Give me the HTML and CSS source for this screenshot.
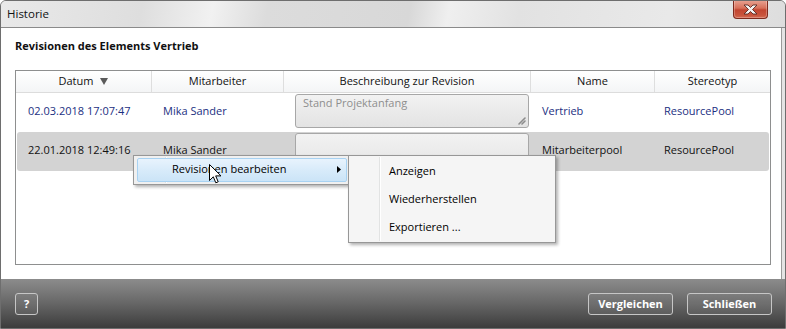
FILE: index.html
```html
<!DOCTYPE html>
<html>
<head>
<meta charset="utf-8">
<link rel="stylesheet" href="styles.css">
</head>
<body>
<div class="window">
  <div class="titlebar">
    <span class="title">Historie</span>
    <div class="close">
      <svg width="17" height="11" viewBox="0 0 17 11"><path d="M2 1 H6 L8.5 3.5 L11 1 H15 L10.5 5.5 L15 10 H11 L8.5 7.5 L6 10 H2 L6.5 5.5 Z" fill="#f4f4f4" stroke="#5a2a22" stroke-width="0.9" stroke-linejoin="round"/></svg>
    </div>
  </div>
  <div class="body">
    <div class="heading">Revisionen des Elements Vertrieb</div>
    <div class="grid">
      <div class="thead">
        <div class="th">Datum <svg class="sort" width="8" height="7" viewBox="0 0 8 7"><path d="M0 0 H8 L4 7 Z" fill="#5a5a5a"/></svg></div>
        <div class="th">Mitarbeiter</div>
        <div class="th">Beschreibung zur Revision</div>
        <div class="th">Name</div>
        <div class="th last">Stereotyp</div>
      </div>
      <div class="row r1">
        <div class="td c1 link">02.03.2018 17:07:47</div>
        <div class="td c2 link">Mika Sander</div>
        <div class="td c3"><div class="ta"><span class="ph">Stand Projektanfang</span>
          <svg class="grip" width="9" height="9" viewBox="0 0 9 9"><path d="M8 2 L2 8 M8 5 L5 8" stroke="#8c8c8c" stroke-width="1.6" stroke-linecap="round"/></svg></div></div>
        <div class="td c4 link">Vertrieb</div>
        <div class="td c5 link">ResourcePool</div>
      </div>
      <div class="row r2">
        <div class="td c1">22.01.2018 12:49:16</div>
        <div class="td c2">Mika Sander</div>
        <div class="td c3"><div class="ta"></div></div>
        <div class="td c4">Mitarbeiterpool</div>
        <div class="td c5">ResourcePool</div>
      </div>
    </div>
  </div>
  <div class="footer">
    <button class="btn help">?</button>
    <div class="spacer"></div>
    <button class="btn wide">Vergleichen</button>
    <button class="btn wide">Schließen</button>
  </div>

  <div class="menu">
    <div class="gutter"></div>
    <div class="mi hot">Revisionen bearbeiten
      <svg class="arrow" width="4" height="7" viewBox="0 0 4 7"><path d="M0 0 L4 3.5 L0 7 Z" fill="#000"/></svg>
    </div>
  </div>
  <div class="submenu">
    <div class="gutter"></div>
    <div class="si">Anzeigen</div>
    <div class="si">Wiederherstellen</div>
    <div class="si">Exportieren ...</div>
  </div>
  <svg class="cursor" width="13" height="21" viewBox="0 0 13 21"><path d="M0.5 0.5 V16.5 L4.3 12.8 L6.8 18.8 L9.2 17.8 L6.7 11.9 L12 11.9 Z" fill="#fff" stroke="#000" stroke-width="1" stroke-linejoin="round"/></svg>
</div>
</body>
</html>
```
FILE: styles.css
```css
* { box-sizing: border-box; }
html, body { margin: 0; padding: 0; }
body {
  width: 786px;
  height: 329px;
  overflow: hidden;
  background: #ffffff;
  font-family: "Open Sans", "Noto Sans", sans-serif;
  font-size: 11px;
  color: #1e1e1e;
}
.window {
  position: relative;
  width: 786px;
  height: 329px;
  display: flex;
  flex-direction: column;
  border: 1px solid #6e6e6e;
  border-radius: 6px 6px 0 0;
  background: #e4e4e4;
  overflow: hidden;
}
.titlebar {
  position: relative;
  flex: none;
  height: 27px;
  display: flex;
  align-items: center;
  padding-left: 6px;
  padding-bottom: 1px;
  border-bottom: 1px solid #8a8a8a;
  background: linear-gradient(100deg, #e9e9e9 0%, #dedede 18%, #f1f1f1 27%, #dcdcdc 34%, #d8d8d8 52%, #efefef 57%, #e2e2e2 66%, #e9e9e9 85%, #dddddd 100%);
}
.title { font-size: 11.5px; color: #111; }
.close {
  position: absolute;
  top: -1px;
  right: 17px;
  width: 35px;
  height: 19px;
  display: flex;
  align-items: center;
  justify-content: center;
  border: 1px solid #7e2a1d;
  border-top: none;
  border-radius: 0 0 4px 4px;
  background: linear-gradient(#e9a595 0%, #d8705a 45%, #c24530 55%, #c9553d 85%, #d66d54 100%);
  box-shadow: inset 0 0 0 1px rgba(255,255,255,0.25);
}
.body {
  flex: 1;
  background: #ffffff;
  margin-right: 3px;
  border-right: 1px solid #9a9a9a;
  padding: 10px 0 0 14px;
}
.heading {
  font-weight: bold;
  font-size: 11px;
  line-height: 16px;
  color: #111;
  margin-bottom: 16px;
}
.grid {
  width: 756px;
  height: 195px;
  border: 1px solid #8e8f8f;
}
.thead {
  display: grid;
  grid-template-columns: 136px 132px 247px 124px 1fr;
  height: 22px;
  border-bottom: 1px solid #dcdcdc;
  background: linear-gradient(#ffffff, #f4f5f6);
}
.th {
  display: flex;
  align-items: center;
  justify-content: center;
  border-right: 1px solid #dedede;
  color: #111;
  padding-bottom: 3px;
}
.th.last { border-right: none; }
.sort { margin-left: 7px; margin-top: 2px; }
.row {
  display: grid;
  grid-template-columns: 136px 132px 247px 124px 1fr;
  margin: 0 1px;
}
.r1 { height: 38px; margin-bottom: 1px; }
.r2 { height: 39px; background: #d3d3d3; border-radius: 3px; }
.td { display: flex; align-items: center; padding-left: 10px; padding-bottom: 4px; }
.r2 .td { padding-bottom: 6px; color: #111; }
.c1 { padding-left: 11px; }
.c5 { padding-left: 8px; }
.link { color: #1b2f7f; }
.row .c3 { align-items: flex-start; padding-bottom: 0; }
.ta {
  position: relative;
  width: 234px;
  height: 34px;
  margin-top: 1px;
  border: 1px solid #a7a7a7;
  border-radius: 3px;
  background: linear-gradient(#f2f2f2, #e3e3e3);
  padding: 0 7px;
  line-height: 15px;
}
.r2 .ta { margin-top: 1px; height: 40px; }
.ph { color: #8e8e8e; }
.grip { position: absolute; right: 2px; bottom: 2px; }
.footer {
  flex: none;
  height: 49px;
  display: flex;
  align-items: center;
  gap: 14px;
  padding: 0 13px 0 14px;
  background: linear-gradient(#8c8c8c, #6a6a6a 45%, #3c3c3c);
}
.spacer { flex: 1; }
.btn {
  height: 22px;
  border: 1px solid #c6c6c6;
  border-radius: 3px;
  background: rgba(255,255,255,0.06);
  color: #ffffff;
  font-family: "Open Sans", "Noto Sans", sans-serif;
  font-weight: bold;
  font-size: 11px;
  padding: 0 0 2px 0;
  margin-top: 1px;
}
.help { width: 23px; }
.wide { width: 85px; }
.menu {
  position: absolute;
  left: 132px;
  top: 154px;
  width: 216px;
  height: 30px;
  border: 1px solid #979797;
  background: #f0f0f0;
  box-shadow: 2px 2px 3px rgba(0,0,0,0.3);
  padding: 2px 1px 2px 3px;
}
.menu .gutter {
  position: absolute;
  left: 31px;
  top: 1px;
  bottom: 1px;
  width: 2px;
  border-left: 1px solid #e2e3e3;
  border-right: 1px solid #ffffff;
}
.mi {
  position: relative;
  height: 24px;
  display: flex;
  align-items: center;
  padding-left: 34px;
  padding-bottom: 4px;
  color: #000;
}
.mi.hot {
  border: 1px solid #a8d2f2;
  border-radius: 2px;
  background: linear-gradient(#e8f3fd, #d8ebfa 50%, #cbe4f7);
}
.arrow { position: absolute; left: 199px; top: 7px; }
.submenu {
  position: absolute;
  left: 347px;
  top: 154px;
  width: 208px;
  height: 88px;
  border: 1px solid #979797;
  background: #f5f5f5;
  box-shadow: 2px 2px 3px rgba(0,0,0,0.3);
  padding: 1px 2px;
}
.submenu .gutter {
  position: absolute;
  left: 30px;
  top: 1px;
  bottom: 1px;
  width: 2px;
  border-left: 1px solid #e2e3e3;
  border-right: 1px solid #ffffff;
}
.si {
  height: 28px;
  display: flex;
  align-items: center;
  padding-left: 38px;
  padding-bottom: 2px;
  color: #000;
}
.cursor { position: absolute; left: 208px; top: 163px; }
```
